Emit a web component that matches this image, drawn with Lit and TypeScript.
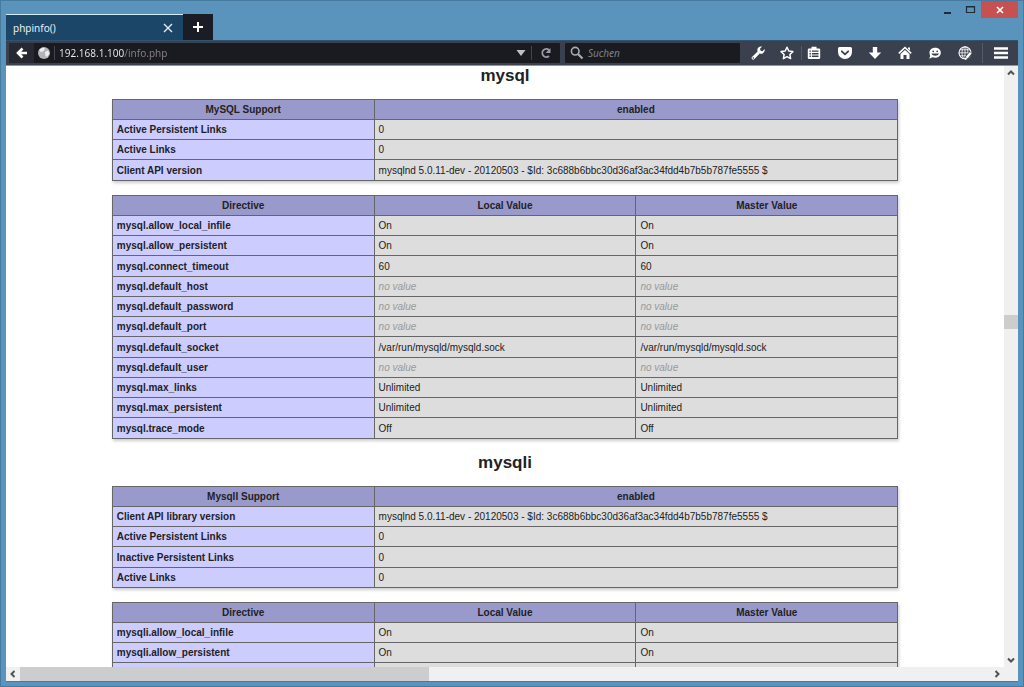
import { LitElement, html, css, svg } from "lit";
import { customElement, property } from "lit/decorators.js";

type Row = string[];
interface InfoTable { head: string[]; rows: Row[] }

const VERSION = "mysqlnd 5.0.11-dev - 20120503 - $Id: 3c688b6bbc30d36af3ac34fdd4b7b5b787fe5555 $";
const NONE = "no value";
const SOCK = "/var/run/mysqld/mysqld.sock";
const DIRECTIVE = ["Directive", "Local Value", "Master Value"];
const both = (name: string, value: string): Row => [name, value, value];

const sections: { title: string; tables: InfoTable[] }[] = [
  {
    title: "mysql",
    tables: [
      {
        head: ["MySQL Support", "enabled"],
        rows: [["Active Persistent Links", "0"], ["Active Links", "0"], ["Client API version", VERSION]],
      },
      {
        head: DIRECTIVE,
        rows: [
          both("mysql.allow_local_infile", "On"),
          both("mysql.allow_persistent", "On"),
          both("mysql.connect_timeout", "60"),
          both("mysql.default_host", NONE),
          both("mysql.default_password", NONE),
          both("mysql.default_port", NONE),
          both("mysql.default_socket", SOCK),
          both("mysql.default_user", NONE),
          both("mysql.max_links", "Unlimited"),
          both("mysql.max_persistent", "Unlimited"),
          both("mysql.trace_mode", "Off"),
        ],
      },
    ],
  },
  {
    title: "mysqli",
    tables: [
      {
        head: ["MysqlI Support", "enabled"],
        rows: [
          ["Client API library version", VERSION],
          ["Active Persistent Links", "0"],
          ["Inactive Persistent Links", "0"],
          ["Active Links", "0"],
        ],
      },
      {
        head: DIRECTIVE,
        rows: [both("mysqli.allow_local_infile", "On"), both("mysqli.allow_persistent", "On"), both("", "")],
      },
    ],
  },
];

const icons = {
  wrench: svg`<path fill="currentColor" d="M14.6 4.1 12.5 6.2 10.6 5.7 10 3.7 12.1 1.6C10 .9 7.4 2.200 7.300 4.900c0 .6.1 1 .3 1.500L2 12c-1.400 1.500.700 3.600 2.200 2.200l5.500-5.600c2.900 1 5.600-1.600 4.900-4.500z"/><circle cx="3.300" cy="13" r=".8" fill="#3a404d"/>`,
  star: svg`<path d="m8 2.200 1.800 3.800 4.100.600-3 2.900.7 4.100L8 11.700l-3.600 1.900.7-4.100-3-2.900L6.200 6z" fill="none" stroke="currentColor" stroke-width="1.500" stroke-linejoin="round"/>`,
  list: svg`<path fill="currentColor" fill-rule="evenodd" d="M5.500 3.500V1.800h5v1.700H13a1.200 1.200 0 0 1 1.200 1.200v8.100A1.200 1.200 0 0 1 13 14H3a1.200 1.200 0 0 1-1.200-1.200V4.700A1.200 1.200 0 0 1 3 3.500zM3.500 5.400v1.400h1.400V5.400zm2.400 0v1.400h6.600V5.400zM3.500 8v1.400h1.400V8zm2.400 0v1.400h6.600V8zm-2.400 2.600V12h1.400v-1.400zm2.400 0V12h6.600v-1.400z"/>`,
  pocket: svg`<path fill="currentColor" d="M2.500 2h11A1.500 1.500 0 0 1 15 3.500V7a7 7 0 0 1-14 0V3.500A1.500 1.500 0 0 1 2.500 2z"/><path d="m4.800 6.300 3.200 3 3.200-3" fill="none" stroke="#3a404d" stroke-width="1.800" stroke-linecap="round" stroke-linejoin="round"/>`,
  down: svg`<path fill="currentColor" d="M5.800 2h4.400v5.500h4L8 14 1.800 7.500h4z"/>`,
  home: svg`<path d="M1.800 8.300 8 2.500l6.200 5.800" fill="none" stroke="currentColor" stroke-width="1.600"/><path fill="currentColor" d="M11 2.500h2v3l-2-1.800zM3.500 9 8 4.900 12.500 9v5h-3v-4h-3v4h-3z"/>`,
  smile: svg`<path fill="currentColor" d="M8.200 2.800c3.600 0 5.600 2.200 5.600 5s-2.200 5-5.600 5c-1 0-1.900-.2-2.700-.500l-3.300 1.400 1-2.800c-.5-1-.7-2-.7-3.100 0-2.800 2.100-5 5.700-5z"/><g fill="#3a404d"><circle cx="6.200" cy="6.300" r=".9"/><circle cx="10.200" cy="6.300" r=".9"/><path d="M4.500 8.500h7.400c-.8 3-6.600 3-7.400 0z"/></g>`,
  globe: svg`<g fill="none" stroke="currentColor"><circle cx="8" cy="7.800" r="6" stroke-width="1.100"/><ellipse cx="8" cy="7.800" rx="3" ry="6" stroke-width=".8"/><path d="M2 7.800h12M8 2v12M3 4.800h10M3 10.800h10" stroke-width=".8"/></g><path d="m9 13.500 5-6" stroke="#3a404d" stroke-width="4"/><path d="m9.500 12.700 4.200-5" stroke="currentColor" stroke-width="2.400"/><path fill="currentColor" d="m7.800 15 .6-2.700 2 1.600z"/>`,
  menu: svg`<path d="M1 3.500h14M1 8h14M1 12.500h14" stroke="currentColor" stroke-width="2.400"/>`,
  back: svg`<path d="M13 8H5M8.500 3.500 4 8l4.500 4.500" fill="none" stroke="currentColor" stroke-width="2.600"/>`,
  site: svg`<circle cx="8" cy="8" r="6" fill="#b4b5b9"/><path fill="#eeeeef" d="M3.500 4.500 7 2.500l2 1-1 2-2 1.500-2-.5zM9 7l3-1.500 1.500 3L11 12l-1.500-1z"/>`,
  caret: svg`<path fill="#bfc1c8" d="M3.500 5h9L8 11z"/>`,
  reload: svg`<path d="M11 11A4 4 0 1 1 11 5" fill="none" stroke="#9a9ca8" stroke-width="1.800"/><path fill="#9a9ca8" d="M12.500 3v5h-5z"/>`,
  search: svg`<circle cx="6.200" cy="6.200" r="3.800" fill="none" stroke="#a9abb3" stroke-width="1.600"/><path d="m9 9 4.500 4.500" stroke="#a9abb3" stroke-width="2.200"/>`,
  cross: svg`<path d="m4 4 8 8m0-8-8 8" stroke="currentColor" stroke-width="1.300"/>`,
  plus: svg`<path d="M8 3v10M3 8h10" stroke="currentColor" stroke-width="2"/>`,
  minimize: svg`<path d="M5 11h7" stroke="currentColor" stroke-width="2"/>`,
  maximize: svg`<path d="M4.500 4.500h8v6h-8zM4 5h9" fill="none" stroke="currentColor" stroke-width="1.200"/>`,
  closeWindow: svg`<path d="m5 5 6 6m0-6-6 6" stroke="currentColor" stroke-width="1.700"/>`,
  up: svg`<path d="m5 9.500 3-3 3 3" fill="none" stroke="currentColor" stroke-width="2"/>`,
  bottom: svg`<path d="m5 6.500 3 3 3-3" fill="none" stroke="currentColor" stroke-width="2"/>`,
  left: svg`<path d="m9.500 5-3 3 3 3" fill="none" stroke="currentColor" stroke-width="2"/>`,
  right: svg`<path d="m6.500 5 3 3-3 3" fill="none" stroke="currentColor" stroke-width="2"/>`,
};

type IconName = keyof typeof icons;
const icon = (name: IconName) =>
  html`<svg class="icon" viewBox="0 0 16 16" aria-hidden="true">${icons[name]}</svg>`;
const iconButton = (name: IconName, label: string, cls = "tool") =>
  html`<button class=${cls} aria-label=${label}>${icon(name)}</button>`;

const base = css`
  * { box-sizing: border-box; }
  button { display: flex; align-items: center; justify-content: center; border: 0; padding: 0; margin: 0; background: none; color: inherit; font: inherit; }
  .icon { width: 16px; height: 16px; flex: none; display: block; }
`;

@customElement("info-table")
class InfoTableElement extends LitElement {
  @property({ attribute: false }) data!: InfoTable;

  static styles = css`
    :host { display: block; }
    table { width: 100%; table-layout: fixed; border-collapse: collapse; box-shadow: 1px 2px 3px #ccc; color: #222; font-size: 10px; line-height: 14px; }
    tr { height: 20px; }
    tr:nth-child(4n) { height: 21px; }
    th, td { box-sizing: border-box; border: 1px solid #666; padding: 1px 4px 0; vertical-align: middle; text-align: left; overflow: hidden; white-space: nowrap; }
    .head { background: #9999cc; text-align: center; }
    .name { background: #ccccff; }
    .key { width: 33.333%; }
    .value { background: #dddddd; }
    .none { color: #999; }
  `;

  render() {
    return html`<table>
      <tbody>
        <tr>${this.data.head.map((h, i) => html`<th class="head ${i === 0 ? "key" : ""}" scope="col">${h}</th>`)}</tr>
        ${this.data.rows.map(([name, ...values]) => html`<tr>
          <th class="name" scope="row">${name}</th>
          ${values.map((v) => html`<td class="value">${v === NONE ? html`<i class="none">${v}</i>` : v}</td>`)}
        </tr>`)}
      </tbody>
    </table>`;
  }
}

@customElement("title-strip")
class TitleStrip extends LitElement {
  static styles = [base, css`
    :host { display: flex; justify-content: space-between; align-items: flex-start; height: 39px; }
    .tabs { display: flex; align-self: flex-end; }
    .tab { display: flex; align-items: center; justify-content: space-between; width: 177px; height: 26px; padding: 0 7px; background: #1b4668; border-top: 1px solid #d3eaf8; color: #e8eff5; }
    .label { color: inherit; text-decoration: none; }
    .new { width: 30px; height: 26px; background: #1b1d26; color: #fff; }
    .controls { display: flex; color: #1d2c38; }
    .control { width: 23px; height: 17px; }
    .close { width: 37px; height: 17px; background: #c75050; color: #fff; }
  `];

  render() {
    return html`
      <div class="tabs">
        <div class="tab"><a class="label" href="#">phpinfo()</a>${iconButton("cross", "Tab schließen", "x")}</div>
        ${iconButton("plus", "Neuer Tab", "new")}
      </div>
      <div class="controls">
        ${iconButton("minimize", "Minimieren", "control")}
        ${iconButton("maximize", "Maximieren", "control")}
        ${iconButton("closeWindow", "Schließen", "close")}
      </div>`;
  }
}

@customElement("nav-bar")
class NavBar extends LitElement {
  static styles = [base, css`
    :host { display: flex; align-items: center; height: 26px; padding: 0 0 0 3px; background: #3a404d; border-top: 1px solid #31536e; border-bottom: 1px solid #6fa0c0; color: #fff; }
    .field { display: flex; align-items: center; height: 20px; background: #191b20; border-radius: 1px; }
    .url { flex: 554; min-width: 0; }
    .search { flex: 172; min-width: 0; margin-left: 5px; margin-right: 3px; padding-left: 4px; gap: 3px; }
    .back { width: 25px; height: 20px; background: #262932; }
    .small { width: 20px; height: 20px; }
    .small.wide { width: 28px; }
    .rule { width: 1px; height: 14px; background: #42454f; }
    .input { flex: 1; min-width: 0; height: 18px; padding: 0 0 0 4px; border: 0; outline: 0; background: transparent; color: #fff; font: inherit; }
    .address { color: transparent; background: linear-gradient(90deg, #f0f0f2 69px, #8a8289 69px); background-clip: text; -webkit-background-clip: text; }
    .input::placeholder { color: #7f8089; font-style: italic; opacity: 1; }
    .search .input { padding-left: 0; }
    .tools { display: flex; align-items: center; }
    .tool { width: 30px; height: 22px; }
    .tool.tight { width: 28px; }
    .tool.after { padding-right: 4px; }
    .tool.menu { width: 35px; }
    .split { width: 1px; height: 20px; background: #545b68; }
    .split.long { margin-left: 2px; }
    .split.short { height: 14px; }
  `];

  render() {
    return html`
      <div class="field url">
        ${iconButton("back", "Zurück", "back")}
        ${iconButton("site", "Website-Identität", "small")}
        <span class="rule"></span>
        <input class="input address" aria-label="Adresse" value="192.168.1.100/info.php" />
        ${iconButton("caret", "Verlauf", "small")}
        <span class="rule"></span>
        ${iconButton("reload", "Neu laden", "small wide")}
      </div>
      <div class="field search">
        ${icon("search")}
        <input class="input" type="text" aria-label="Suchen" placeholder="Suchen" />
      </div>
      <div class="tools">
        ${iconButton("wrench", "Werkzeuge")}
        ${iconButton("star", "Lesezeichen", "tool tight")}
        <span class="split short"></span>
        ${iconButton("list", "Lesezeichen anzeigen", "tool tight after")}
        ${iconButton("pocket", "Pocket")}
        ${iconButton("down", "Downloads")}
        ${iconButton("home", "Startseite")}
        ${iconButton("smile", "Hello")}
        ${iconButton("globe", "Webseite bearbeiten")}
        <span class="split long"></span>
        ${iconButton("menu", "Menü", "tool menu")}
      </div>`;
  }
}

@customElement("scroll-track")
class ScrollTrack extends LitElement {
  @property({ type: Boolean, reflect: true }) vertical = false;
  @property({ type: Number }) start = 0;
  @property({ type: Number }) size = 10;

  static styles = [base, css`
    :host { display: flex; background: #f0f0f0; color: #505258; height: 14px; }
    :host([vertical]) { flex-direction: column; height: auto; width: 14px; }
    .arrow { width: 14px; height: 14px; flex: none; overflow: hidden; }
    .lane { display: flex; flex: 1; min-width: 0; min-height: 0; }
    :host([vertical]) .lane { flex-direction: column; }
    .thumb { background: #cdcdcd; }
  `];

  render() {
    return html`
      ${iconButton(this.vertical ? "up" : "left", "Zurück blättern", "arrow")}
      <div class="lane">
        <div style="flex: ${this.start} 0 0"></div>
        <div class="thumb" style="flex: ${this.size} 0 0"></div>
        <div style="flex: ${100 - this.start - this.size} 0 0"></div>
      </div>
      ${iconButton(this.vertical ? "bottom" : "right", "Weiter blättern", "arrow")}`;
  }
}

@customElement("app-root")
class AppRoot extends LitElement {
  static styles = [base, css`
    :host { display: flex; flex-direction: column; box-sizing: border-box; height: 100vh; padding: 0 5px 4px; overflow: hidden; background: #5a94bc; border: 1px solid #467a9e; font-family: "Noto Sans", sans-serif; font-size: 10px; }
    title-strip, nav-bar { flex: none; }
    .view { flex: 1; min-height: 0; display: grid; grid-template-columns: minmax(0, 1fr) 14px; grid-template-rows: minmax(0, 1fr) 14px; background: #f0f0f0; border-bottom: 1px solid #467a9e; }
    .page { overflow: hidden; background: #fff; font-family: "Liberation Sans", Arial, sans-serif; }
    .content { width: 78.8%; margin: 0 auto; }
    h2 { margin: 0; color: #222; font-size: 17px; line-height: 20px; text-align: center; padding-bottom: 13px; }
    info-table { margin-bottom: 14px; }
  `];

  render() {
    return html`
      <title-strip></title-strip>
      <nav-bar></nav-bar>
      <div class="view">
        <main class="page">
          <div class="content">
            ${sections.map((s) => html`<section>
              <h2>${s.title}</h2>
              ${s.tables.map((t) => html`<info-table .data=${t}></info-table>`)}
            </section>`)}
          </div>
        </main>
        <scroll-track vertical .start=${41} .size=${2.5}></scroll-track>
        <scroll-track .start=${0} .size=${42.2}></scroll-track>
      </div>`;
  }
}
